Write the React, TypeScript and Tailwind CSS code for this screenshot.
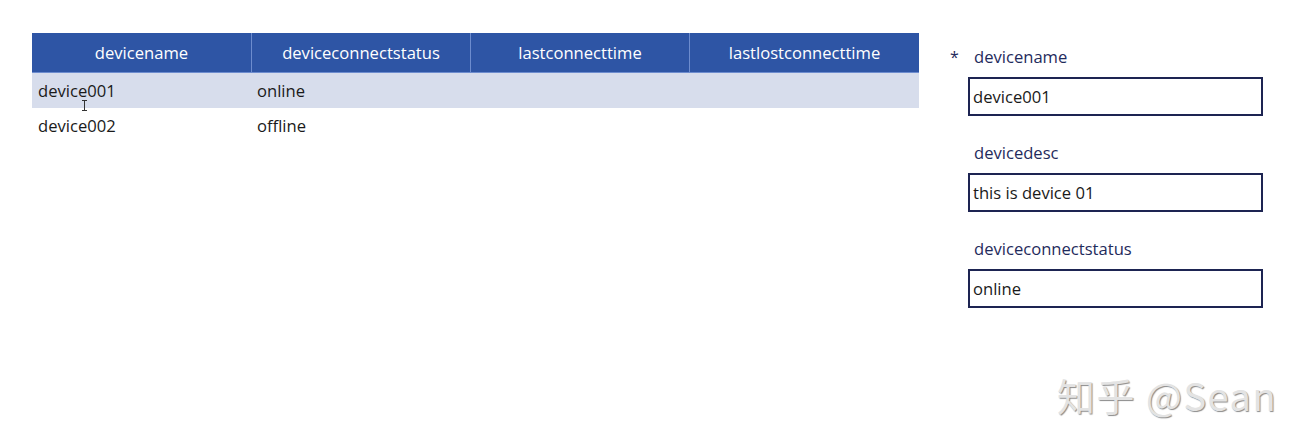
import React from 'react';

const columns = ['devicename', 'deviceconnectstatus', 'lastconnecttime', 'lastlostconnecttime'];

const rows = [
  { name: 'device001', status: 'online', selected: true },
  { name: 'device002', status: 'offline', selected: false },
];

const fields = [
  { label: 'devicename', value: 'device001', required: true },
  { label: 'devicedesc', value: 'this is device 01', required: false },
  { label: 'deviceconnectstatus', value: 'online', required: false },
];

const font = { fontFamily: '"Open Sans", "Noto Sans", sans-serif' };

const App: React.FC = () => {
  return (
    <div className="relative w-[1309px] h-[447px] bg-white flex pt-[33px] pl-[32px] text-[16.6px] text-[#1a1a1a]" style={font}>
      {/* table */}
      <div className="w-[887px]">
        <div className="flex h-[40px] bg-[#2e55a5] text-white border-b border-[#6d8cce]">
          {columns.map((c, i) => (
            <div
              key={c}
              className={`flex items-center justify-center pt-[2px] ${i === 3 ? 'flex-1' : 'w-[219px]'} ${i > 0 ? 'border-l border-[#6d8cce]' : ''}`}
            >
              {c}
            </div>
          ))}
        </div>
        {rows.map(r => (
          <div key={r.name} className={`relative flex h-[35px] items-center ${r.selected ? 'bg-[#d7ddec]' : ''}`}>
            <div className="w-[219px] pl-[6px] pt-[1px]">{r.name}</div>
            <div className="w-[219px] pl-[6px] pt-[1px]">{r.status}</div>
            <div className="w-[219px]" />
            <div className="flex-1" />
            {r.selected && (
              <svg className="absolute left-[49px] top-[27px]" width="7" height="11" viewBox="0 0 7 11">
                <path d="M1 0.5h5M3.5 0.5v10M1 10.5h5" stroke="#333" strokeWidth="1" fill="none" />
              </svg>
            )}
          </div>
        ))}
      </div>

      {/* form */}
      <div className="ml-[30px] mt-[14px] flex flex-col gap-[27px]">
        {fields.map(f => (
          <div key={f.label} className="flex flex-col gap-[10px]">
            <div className="flex h-[20px] items-center text-[#1f2b5c]">
              <span className="w-[25px] pl-[1px] text-[16px]">{f.required ? '*' : ''}</span>
              <span>{f.label}</span>
            </div>
            <div className="ml-[19px] w-[295px] h-[39px] border-2 border-[#1d2452] flex items-center pl-[3px] pt-[2px]">
              {f.value}
            </div>
          </div>
        ))}
      </div>

      {/* watermark */}
      <div
        className="absolute left-[1057px] top-[366px] text-[38px] text-[#e3e3e3] [text-shadow:1px_1px_1px_#8a8a8a] tracking-[1.5px]"
        style={{ fontFamily: '"Noto Sans CJK SC", "Noto Sans", sans-serif' }}
      >
        知乎 @Sean
      </div>
    </div>
  );
};

export default App;
